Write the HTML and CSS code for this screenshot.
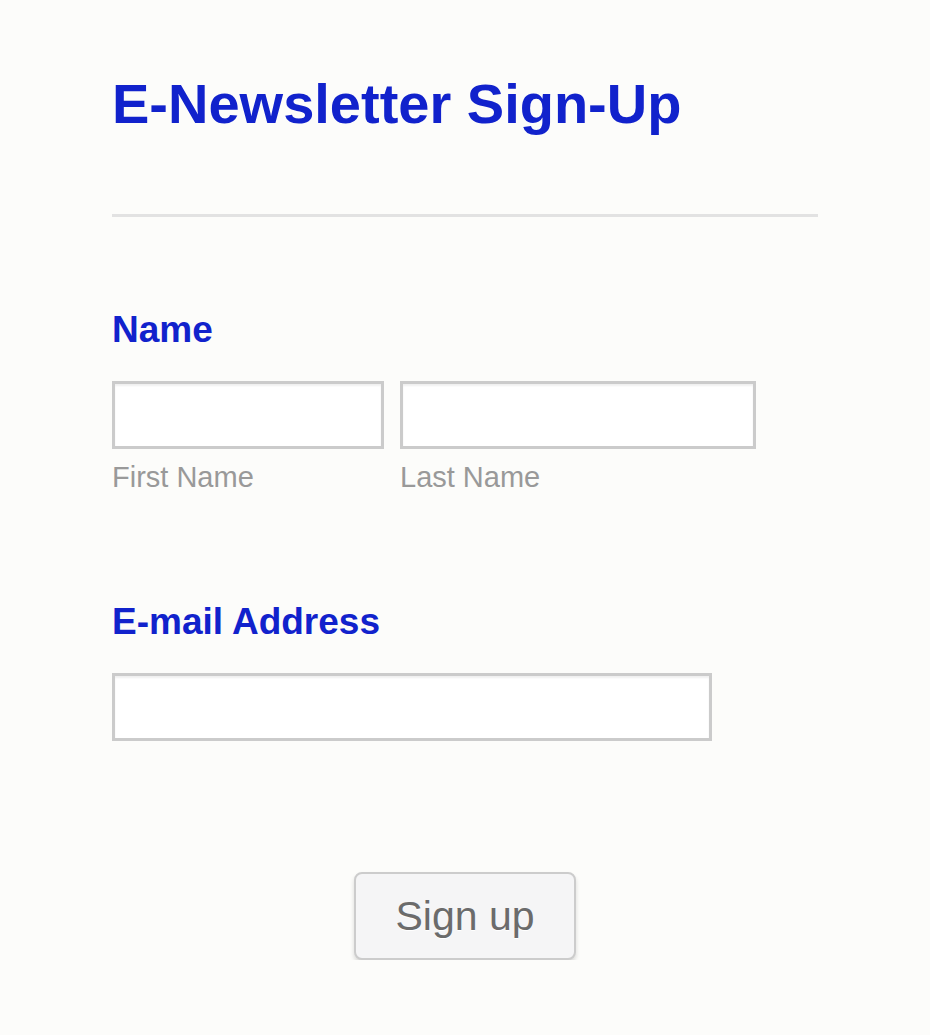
FILE: index.html
```html
<!DOCTYPE html>
<html lang="en">
<head>
<meta charset="utf-8">
<title>E-Newsletter Sign-Up</title>
<link rel="stylesheet" href="styles.css">
</head>
<body>
<main class="signup">
  <h1 class="signup-title">E-Newsletter Sign-Up</h1>
  <hr class="divider">
  <form class="form">
    <div class="field field-name">
      <label class="field-label">Name</label>
      <div class="name-row">
        <div class="sub-field">
          <input class="text-input input-first" type="text">
          <span class="sub-label">First Name</span>
        </div>
        <div class="sub-field">
          <input class="text-input input-last" type="text">
          <span class="sub-label">Last Name</span>
        </div>
      </div>
    </div>
    <div class="field field-email">
      <label class="field-label">E-mail Address</label>
      <input class="text-input input-email" type="email">
    </div>
    <div class="actions">
      <button class="submit" type="button">Sign up</button>
    </div>
  </form>
</main>
</body>
</html>
```

FILE: styles.css
```css
html, body {
  margin: 0;
  padding: 0;
  background: #fcfcfa;
}

body {
  font-family: "Liberation Sans", Arial, sans-serif;
}

.signup {
  width: 706px;
  padding: 72px 0 0 112px;
}

.signup-title {
  margin: 0;
  font-size: 56px;
  line-height: 64px;
  font-weight: bold;
  color: #1122cc;
}

.divider {
  margin: 78px 0 0;
  height: 3px;
  border: 0;
  background: #e2e2e2;
}

.form {
  display: flex;
  flex-direction: column;
}

.field-label {
  display: block;
  font-size: 37px;
  line-height: 40px;
  font-weight: bold;
  color: #1122cc;
}

.field-name {
  margin-top: 93px;
}

.field-email {
  margin-top: 107px;
}

.name-row {
  display: flex;
  gap: 16px;
  margin-top: 31px;
}

.sub-field {
  display: flex;
  flex-direction: column;
}

.text-input {
  display: block;
  box-sizing: border-box;
  height: 68px;
  margin: 0;
  border: 3px solid #cbcbcb;
  background: #ffffff;
  box-shadow: inset 0 2px 2px #f0f0f0;
  font: inherit;
  padding: 0 8px;
}

.field-email .text-input {
  margin-top: 31px;
}

.input-first { width: 272px; }
.input-last { width: 356px; }
.input-email { width: 600px; }

.sub-label {
  margin-top: 10px;
  font-size: 29px;
  line-height: 36px;
  color: #999999;
}

.actions {
  display: flex;
  justify-content: center;
  margin-top: 131px;
}

.submit {
  box-sizing: border-box;
  width: 222px;
  height: 88px;
  padding: 0;
  border: 2px solid #cccccc;
  border-radius: 8px;
  background: #f5f5f6;
  box-shadow: 0 3px 4px rgba(0, 0, 0, 0.14);
  font-family: "Liberation Sans", Arial, sans-serif;
  font-size: 41px;
  color: #6b6b6b;
  text-shadow: 0 1px 0 #ffffff;
}
```
